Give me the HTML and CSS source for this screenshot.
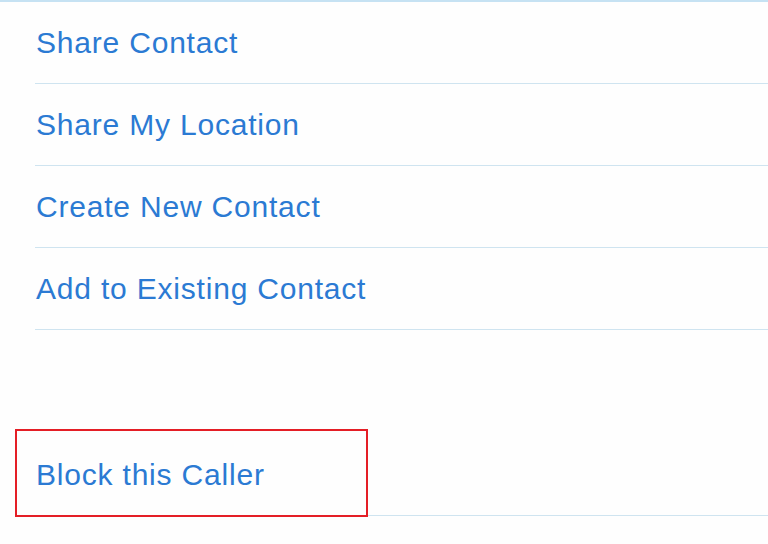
FILE: index.html
```html
<!DOCTYPE html>
<html>
<head>
<meta charset="utf-8">
<link rel="stylesheet" href="styles.css">
</head>
<body>
<div class="screen">
  <ul class="group">
    <li class="row"><span class="label">Share Contact</span></li>
    <li class="row"><span class="label">Share My Location</span></li>
    <li class="row"><span class="label">Create New Contact</span></li>
    <li class="row"><span class="label">Add to Existing Contact</span></li>
  </ul>
  <ul class="group group-block">
    <li class="row"><span class="label">Block this Caller</span><span class="highlight"></span></li>
  </ul>
</div>
</body>
</html>
```
FILE: styles.css
```css
html, body {
  margin: 0;
  padding: 0;
  background: #fefefe;
}
.screen {
  width: 768px;
  height: 544px;
  overflow: hidden;
  border-top: 2px solid #c6e2f3;
  box-sizing: border-box;
  font-family: "Liberation Sans", Arial, sans-serif;
}
.group {
  list-style: none;
  margin: 0;
  padding: 0 0 0 35px;
}
.group-block {
  margin-top: 104px;
}
.row {
  position: relative;
  height: 82px;
  border-bottom: 1px solid #cfe4f0;
  display: flex;
  align-items: center;
  padding-left: 1px;
  box-sizing: border-box;
}
.label {
  color: #2b7ad3;
  font-size: 30px;
  letter-spacing: 0.8px;
  padding-top: 1px;
}
.highlight {
  position: absolute;
  left: -20px;
  top: -5px;
  width: 353px;
  height: 88px;
  border: 2.5px solid #e41e26;
  box-sizing: border-box;
}
```
